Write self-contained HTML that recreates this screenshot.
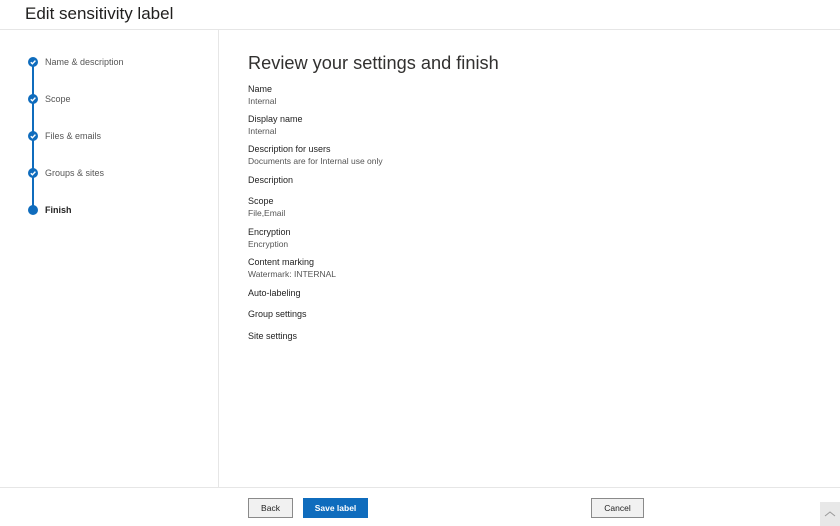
<!DOCTYPE html>
<html><head><meta charset="utf-8">
<style>
*{margin:0;padding:0;box-sizing:border-box}
body{width:840px;height:526px;background:#fff;font-family:"Liberation Sans",sans-serif;position:relative;overflow:hidden;color:#222}
.a{position:absolute;white-space:nowrap}
.t{font-size:17px;left:25px;top:4px;color:#201f1e}
.hl{position:absolute;left:0;top:29px;width:840px;height:1px;background:#e6e6e6}
.vl{position:absolute;left:218px;top:30px;width:1px;height:457px;background:#e6e6e6}
.fl{position:absolute;left:0;top:487px;width:840px;height:1px;background:#e6e6e6}
.step{font-size:9px;color:#555;left:45px}
.line{position:absolute;left:32px;width:2px;background:#0f6cbd}
.c{position:absolute;left:28px;width:10px;height:10px;border-radius:50%;background:#0f6cbd}
.h{font-size:18.2px;left:248px;top:53px;color:#323130}
.l{font-size:9px;left:248px;color:#222}
.v{font-size:8.5px;left:248px;color:#555}
.btn{position:absolute;top:498px;height:20px;font-size:8.5px;display:flex;align-items:center;justify-content:center}
.g{background:#f1f1f1;border:1px solid #8a8a8a;color:#222}
</style></head><body>
<div class="a t">Edit sensitivity label</div>
<div class="hl"></div><div class="vl"></div><div class="fl"></div>

<div class="line" style="top:62px;height:148px"></div>
<div class="c" style="top:57px"></div>
<div class="c" style="top:94px"></div>
<div class="c" style="top:131px"></div>
<div class="c" style="top:168px"></div>
<div class="c" style="top:205px"></div>
<svg class="a" style="left:28px;top:57px" width="10" height="160">
<g fill="none" stroke="#fff" stroke-width="1.4">
<path d="M2.8 5.2l1.6 1.6 3-3.2"/>
<path d="M2.8 42.2l1.6 1.6 3-3.2"/>
<path d="M2.8 79.2l1.6 1.6 3-3.2"/>
<path d="M2.8 116.2l1.6 1.6 3-3.2"/>
</g></svg>
<div class="a step" style="top:57px">Name &amp; description</div>
<div class="a step" style="top:94px">Scope</div>
<div class="a step" style="top:131px">Files &amp; emails</div>
<div class="a step" style="top:168px">Groups &amp; sites</div>
<div class="a step" style="top:205px;font-weight:bold;color:#222">Finish</div>

<div class="a h">Review your settings and finish</div>
<div class="a l" style="top:84px">Name</div>
<div class="a v" style="top:96px">Internal</div>
<div class="a l" style="top:114px">Display name</div>
<div class="a v" style="top:126px">Internal</div>
<div class="a l" style="top:144px">Description for users</div>
<div class="a v" style="top:156px">Documents are for Internal use only</div>
<div class="a l" style="top:175px">Description</div>
<div class="a l" style="top:196px">Scope</div>
<div class="a v" style="top:208px">File,Email</div>
<div class="a l" style="top:227px">Encryption</div>
<div class="a v" style="top:239px">Encryption</div>
<div class="a l" style="top:257px">Content marking</div>
<div class="a v" style="top:269px">Watermark: INTERNAL</div>
<div class="a l" style="top:288px">Auto-labeling</div>
<div class="a l" style="top:309px">Group settings</div>
<div class="a l" style="top:331px">Site settings</div>

<div class="btn g" style="left:248px;width:45px">Back</div>
<div class="btn" style="left:303px;width:65px;background:#0f6cbd;color:#fff;font-weight:bold">Save label</div>
<div class="btn g" style="left:591px;width:53px">Cancel</div>
<div class="a" style="left:820px;top:502px;width:20px;height:24px;background:#e8e8e8"></div>
<svg class="a" style="left:824px;top:510px" width="12" height="8"><path d="M1 6l5-4 5 4" fill="none" stroke="#999" stroke-width="1"/></svg>
</body></html>
